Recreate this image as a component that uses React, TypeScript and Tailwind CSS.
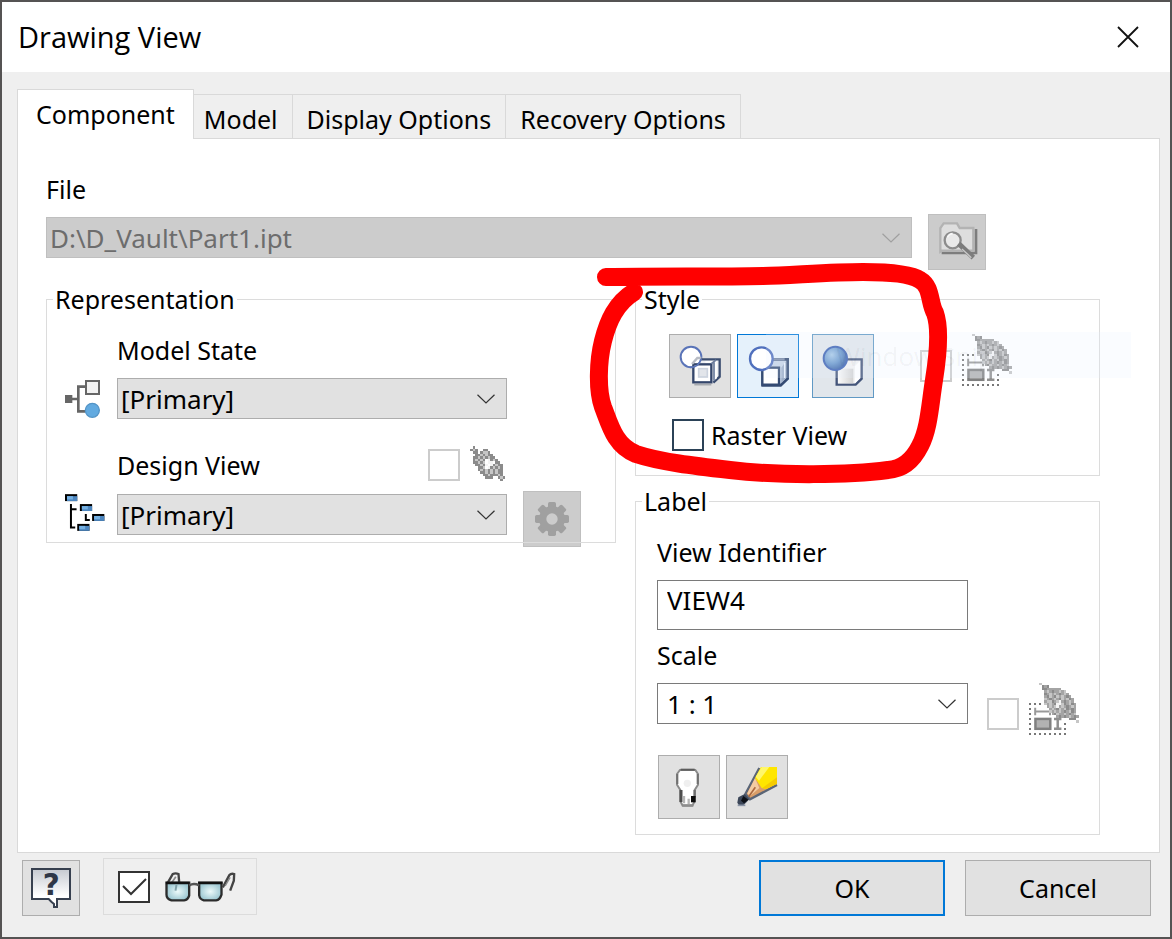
import type { ReactNode } from "react";
import { useState } from "react";

const tabs = ["Component", "Model", "Display Options", "Recovery Options"];

// one character per pixel, "." is empty
const SHADES: Record<string, string> = { d: "#8b8b8b", m: "#a4a4a4", l: "#c6c6c6", w: "#f4f4f4" };

const PLUG = [
  ".d............",
  "dld..dd.......",
  ".dd.dlld......",
  "..ddldldd.....",
  ".ddldldldd....",
  ".dldld.wdld...",
  ".ddldl.ww.dd..",
  "..ddldw.wdldd.",
  "...ddl.wdldld.",
  "...dldldldldd.",
  "....ddldldldd.",
  ".....ddldddld.",
  "......ddd..dld",
  "............d.",
];

const LEAF = [
  "l...............",
  ".dmd............",
  ".ddmmmmmm.......",
  "..mlmdmmlml.....",
  "..dmlmlmdmlm....",
  "..mdlmdlmlmdm...",
  "..lmdmlmdlmldm..",
  "..mlldmlwmdmlm..",
  "..lmlmdwwldmldm.",
  "...mlmlwmlmdmlm.",
  "....mlmdlmldmdm.",
  "....lmlmlmdmldm.",
  ".....mdlmmlmdml.",
  ".......mdmdmlmdm",
  "............ddd.",
  "...............l",
];

function Pixels({ rows, x = 0, y = 0 }: { rows: string[]; x?: number; y?: number }) {
  return (
    <g shapeRendering="crispEdges">
      {rows.flatMap((row, r) =>
        row.split("").map((c, i) =>
          c === "." ? null : (
            <rect key={`${r}-${i}`} x={x + i} y={y + r} width="1" height="1" fill={SHADES[c]} />
          )
        )
      )}
    </g>
  );
}

function InheritIcon() {
  return (
    <svg viewBox="0 0 20 21" className="h-[52px] w-[50px] shrink-0" aria-hidden="true">
      <g fill="#777" shapeRendering="crispEdges">
        {[0, 2, 4].map((x) => (
          <rect key={x} x={x} y="8" width="0.8" height="1" />
        ))}
        {[10, 12, 14, 16, 18].map((y) => (
          <rect key={y} x="0" y={y} width="0.8" height="1" />
        ))}
        {[0, 2, 4, 6, 8, 10, 12, 14].map((x) => (
          <rect key={x} x={x} y="20" width="0.8" height="1" />
        ))}
        <rect x="14" y="16" width="0.8" height="1" />
        <rect x="14" y="18" width="0.8" height="1" />
      </g>
      <path d="M2.4 10V13M2.4 11.5H8.4M8.4 10V13" stroke="#999" strokeWidth="0.8" />
      <rect x="2" y="14" width="7" height="5" fill="#808080" />
      <rect x="3" y="15" width="5" height="3" fill="#b2b2b2" />
      <path d="M10 14.5H13M11.5 14.5V18.5M10 18.5H13" stroke="#8f8f8f" strokeWidth="1" />
      <Pixels rows={LEAF} x={4} y={0} />
    </svg>
  );
}

function Chevron({ className = "text-[#333]" }: { className?: string }) {
  return (
    <svg
      viewBox="0 0 18 10"
      className={`pointer-events-none absolute right-3 top-4 h-[10px] w-[18px] ${className}`}
      fill="none"
      stroke="currentColor"
      strokeWidth="1.2"
      aria-hidden="true"
    >
      <path d="M0.5 0.7L9 9L17.5 0.7" />
    </svg>
  );
}

function Group({ title, className = "", children }: { title: string; className?: string; children: ReactNode }) {
  return (
    <fieldset className={`relative min-w-0 border border-[#dcdcdc] ${className}`}>
      <legend className="ml-[6px] px-[2px] leading-8">{title}</legend>
      {children}
    </fieldset>
  );
}

function ToolButton({ label, className, children }: { label: string; className: string; children: ReactNode }) {
  return (
    <button type="button" aria-label={label} className={`shrink-0 border ${className}`}>
      {children}
    </button>
  );
}

const box = "size-8 shrink-0 appearance-none border-2 bg-white";

function HiddenLinesIcon() {
  return (
    <svg viewBox="90 45 180 186" className="size-full">
      <circle cx="153" cy="111" r="31" fill="#fff" stroke="#5a74b8" strokeWidth="6" />
      <path d="M182 118H239V170L220 188H163" fill="#eef0f3" />
      <path d="M182 118H239V170L220 188" fill="none" stroke="#3b4d70" strokeWidth="7" />
      <path d="M196 126H228V174L218 180" fill="none" stroke="#fff" strokeWidth="5" />
      <rect x="160" y="133" width="54" height="54" fill="#fff" stroke="#34466b" strokeWidth="7" />
      <rect x="176" y="146" width="26" height="25" fill="#e2e5ea" stroke="#ccd3de" strokeWidth="5" />
      <path d="M214 131L228 120M222 126V182" fill="none" stroke="#6c7d9d" strokeWidth="5" />
      <path d="M163 194H214" stroke="#a7aaaf" strokeWidth="5" />
      <path d="M156 132L172 114H184" fill="none" stroke="#b8bcc4" strokeWidth="7" />
      <path d="M150 142Q176 142 184 116" fill="none" stroke="#5a74b8" strokeWidth="5" />
    </svg>
  );
}

function NoHiddenLinesIcon() {
  return (
    <svg viewBox="294 45 180 186" className="size-full">
      <path d="M368 141L390 118H443V176L422 196H368Z" fill="#c6d4e6" stroke="#344b73" strokeWidth="8" />
      <path d="M389 118H434" stroke="#7f8eaa" strokeWidth="7" />
      <path d="M424 143L438 124V174L424 190Z" fill="#9eafc8" />
      <rect x="367" y="143" width="50" height="51" fill="#fff" stroke="#344b73" strokeWidth="7" />
      <path d="M434 128V174" stroke="#e9f2fc" strokeWidth="4" />
      <circle cx="364" cy="116" r="34" fill="#fff" stroke="#5070bd" strokeWidth="7" />
    </svg>
  );
}

function ShadedIcon() {
  return (
    <svg viewBox="519 45 180 186" className="size-full">
      <defs>
        <radialGradient id="ball" cx="35%" cy="35%" r="75%">
          <stop offset="0" stopColor="#a8c9e7" />
          <stop offset="0.5" stopColor="#6a98cc" />
          <stop offset="1" stopColor="#2f589f" />
        </radialGradient>
        <linearGradient id="face">
          <stop offset="0" stopColor="#fafafa" />
          <stop offset="1" stopColor="#d2d2d2" />
        </linearGradient>
      </defs>
      <path d="M590 140L614 118H665V176L647 194H590Z" fill="#f3f3f3" stroke="#44557a" strokeWidth="7" />
      <path d="M594 146H640V190H594Z" fill="url(#face)" />
      <path d="M645 138L660 123V174L645 190Z" fill="#fff" />
      <circle cx="586" cy="115" r="35" fill="url(#ball)" stroke="#3c62b3" strokeWidth="6" />
    </svg>
  );
}

function FolderSearchIcon() {
  return (
    <svg viewBox="117 45 168 162" className="size-full">
      <path d="M155 159H258V87" fill="none" stroke="#7d7d7d" strokeWidth="8" />
      <path d="M151 155V84L161 70H201L209 84H250V152H155Z" fill="#dedede" stroke="#b3b3b3" strokeWidth="7" />
      <circle cx="188" cy="121" r="24" fill="#e9e9e9" stroke="#8c8c8c" strokeWidth="7" />
      <path d="M172 112Q178 101 188 101" fill="none" stroke="#f8f8f8" strokeWidth="5" />
      <path d="M206 131L250 173" stroke="#7c7c7c" strokeWidth="15" />
      <path d="M216 147L244 173" stroke="#c9c9c9" strokeWidth="4" />
    </svg>
  );
}

function GearIcon() {
  return (
    <svg viewBox="342 336 168 162" className="size-full">
      {[0, 45, 90, 135].map((a) => (
        <rect key={a} x="414" y="366" width="24" height="102" rx="5" fill="#a0a0a0" transform={`rotate(${a} 426 417)`} />
      ))}
      <circle cx="426" cy="417" r="39" fill="#a0a0a0" />
      <circle cx="426" cy="417" r="17" fill="#ccc" />
    </svg>
  );
}

function BulbIcon() {
  return (
    <svg viewBox="87 288 180 186" className="size-full">
      <path
        d="M150 330H196L204 342V374L194 390V424L187 437H158L151 424V390L141 374V342Z"
        fill="#fff"
        stroke="#8a8a8a"
        strokeWidth="6"
      />
      <path d="M152 329H194" stroke="#5c5c5c" strokeWidth="6" />
      <path d="M142 342V372M203 342V372" stroke="#707070" strokeWidth="6" />
      <circle cx="172" cy="370" r="11" fill="#efefef" />
      <path d="M153 390V426" stroke="#4d4d4d" strokeWidth="9" />
      <path d="M162 408V430M176 416V432" stroke="#b5b5b5" strokeWidth="7" />
      <path d="M194 390V412" stroke="#6e6e6e" strokeWidth="7" />
      <path d="M190 408V427" stroke="#0c0c0c" strokeWidth="14" />
      <path d="M158 436H190" stroke="#8e8e8e" strokeWidth="7" />
    </svg>
  );
}

function PencilIcon() {
  return (
    <svg viewBox="291 288 180 186" className="size-full">
      <path d="M388 324L346 402L360 418L441 375" fill="#d99d68" stroke="#5a6577" strokeWidth="7" />
      <path d="M375 354L352 400L360 408L388 384Z" fill="#f3cba2" />
      <path d="M376 382L356 410" stroke="#a9683f" strokeWidth="5" />
      <path d="M393 321H441V371L408 387L395 384L375 354Z" fill="#ffe600" />
      <path d="M395 321H418L387 362L377 350Z" fill="#fff76a" />
      <path d="M441 352V371L408 387L397 384Z" fill="#f5cc00" />
      <path d="M344 402L358 418L342 434L328 438L322 428L325 412Z" fill="#3b4658" />
      <path d="M340 408L355 419L342 430L333 422Z" fill="#0e1117" />
      <path d="M323 436H346" stroke="#8993a5" strokeWidth="5" />
    </svg>
  );
}

function HelpIcon() {
  return (
    <svg viewBox="69 63 168 162" className="size-full">
      <defs>
        <linearGradient id="bubble" x2="0" y2="1">
          <stop offset="0" stopColor="#c5c9d0" />
          <stop offset="0.7" stopColor="#fff" />
        </linearGradient>
      </defs>
      <path d="M96 87H210V177H171V201H162V192L154 185L146 177H96Z" fill="url(#bubble)" stroke="#37404f" strokeWidth="6" />
      <text x="154" y="165" textAnchor="middle" fontFamily="DejaVu Sans, sans-serif" fontWeight="700" fontSize="88" fill="#2f3747">
        ?
      </text>
    </svg>
  );
}

function GlassesIcon() {
  return (
    <svg viewBox="495 92 212 90" className="h-[30px] w-[71px]" fill="none" aria-hidden="true">
      <defs>
        <radialGradient id="lens">
          <stop offset="0" stopColor="#edfafa" />
          <stop offset="1" stopColor="#9fc9d3" />
        </radialGradient>
      </defs>
      <path d="M503 124L518 98Q526 94 535 98L537 122" stroke="#444" strokeWidth="7" />
      <path d="M514 125L527 106" stroke="#888" strokeWidth="5" />
      <path d="M499 124H567V163Q563 176 552 177H514Q499 173 499 160Z" fill="url(#lens)" stroke="#2c2c2c" strokeWidth="7" />
      <path d="M597 124H664V160Q659 176 648 177H611Q599 174 597 162Z" fill="url(#lens)" stroke="#2c2c2c" strokeWidth="7" />
      <path d="M497 125H568M594 125H667" stroke="#111" strokeWidth="8" />
      <path d="M567 132Q581 124 597 132" stroke="#555" strokeWidth="8" />
      <path d="M529 130L526 148" stroke="#7fa0a8" strokeWidth="6" />
      <path d="M668 138L687 102Q693 95 702 98L701 118L690 148" stroke="#444" strokeWidth="7" />
      <path d="M675 134L690 108" stroke="#888" strokeWidth="4" />
    </svg>
  );
}

export default function App() {
  const [tab, setTab] = useState("Component");

  return (
    <div className="flex min-h-screen flex-col border-2 border-[#555353] bg-[#efefef] font-['Noto_Sans','Open_Sans',sans-serif] text-[25px] leading-8 text-black">
      {/* Title bar */}
      <header className="flex h-[70px] items-center justify-between bg-white pl-4 pr-[31px]">
        <h1 className="font-['Open_Sans',sans-serif] text-[29px]">Drawing View</h1>
        <button type="button" aria-label="Close">
          <svg viewBox="0 0 22 22" className="size-[22px]" stroke="#111" strokeWidth="1.8">
            <path d="M1 1L21 21M21 1L1 21" />
          </svg>
        </button>
      </header>

      <main className="flex flex-1 flex-col pl-[15px] pr-[10px] pt-[17px]">
        {/* Tabs */}
        <div role="tablist" className="relative z-10 -mb-px flex items-end">
          {tabs.map((t) => (
            <button
              key={t}
              type="button"
              role="tab"
              aria-selected={t === tab}
              onClick={() => setTab(t)}
              className={
                t === tab
                  ? "relative -mr-1 h-[50px] border border-b-0 border-[#d9d9d9] bg-white px-[18px] pb-[2px]"
                  : "h-[45px] border border-l-0 border-[#d9d9d9] px-[14px] pt-1"
              }
            >
              {t}
            </button>
          ))}
        </div>

        <section className="isolate flex-1 border border-[#d9d9d9] bg-white pb-[17px] pl-7 pr-[59px] pt-[34px]">
          <label htmlFor="file" className="block">
            File
          </label>
          <div className="mt-[9px] flex items-start gap-4 pr-[114px]">
            <div className="relative mt-[3px] flex-1">
              <select
                id="file"
                disabled
                className="h-[41px] w-full appearance-none border border-[#bfbfbf] bg-[#ccc] px-[3px] text-[26px] text-[#6d6d6d] opacity-100"
              >
                <option>D:\D_Vault\Part1.ipt</option>
              </select>
              <Chevron className="text-[#a0a0a0]" />
            </div>
            <ToolButton label="Browse" className="h-14 w-[58px] border-[#bfbfbf] bg-[#ccc]">
              <FolderSearchIcon />
            </ToolButton>
          </div>

          <div className="mt-[13px] grid grid-cols-[570fr_465fr] items-start gap-[19px]">
            <Group title="Representation">
              <div className="pl-[70px] pr-[34px] pt-[19px]">
                <label htmlFor="state">Model State</label>
                <div className="-ml-[52px] mt-3 flex items-center gap-4 pr-[74px]">
                  <svg viewBox="105 300 108 114" className="h-[38px] w-9" aria-hidden="true">
                    <path d="M124 357H145M166 320H145V394H166" fill="none" stroke="#666" strokeWidth="8" />
                    <rect x="105" y="345" width="22" height="24" fill="#666" />
                    <rect x="168" y="303" width="39" height="39" fill="#f2f2f2" stroke="#666" strokeWidth="6" />
                    <circle cx="187" cy="391" r="21" fill="#62aae0" stroke="#5394c6" strokeWidth="4" />
                  </svg>
                  <div className="relative flex-1">
                    <select
                      id="state"
                      className="h-[41px] w-full appearance-none border border-[#adadad] bg-[#e1e1e1] px-[3px] text-[26px]"
                    >
                      <option>[Primary]</option>
                    </select>
                    <Chevron />
                  </div>
                </div>

                <div className="mt-[30px] flex h-8 items-center pr-[74px]">
                  <label htmlFor="design" className="flex-1">
                    Design View
                  </label>
                  <input type="checkbox" disabled aria-label="Associative" className={`${box} border-[#ccc]`} />
                  <svg viewBox="0 0 14 14" className="mb-1 ml-[10px] mr-[2px] size-[35px]" aria-hidden="true">
                    <Pixels rows={PLUG} />
                  </svg>
                </div>

                <div className="-mb-[5px] -ml-[52px] mt-[10px] flex items-start gap-3">
                  <svg viewBox="105 642 121 111" className="mt-[3px] h-[37px] w-10" aria-hidden="true">
                    <path d="M123 672V743H136M123 688H140M168 702V720H180" fill="none" stroke="#000" strokeWidth="6" />
                    {[
                      [105, 642],
                      [150, 672],
                      [187, 702],
                      [142, 732],
                    ].map(([x, y]) => (
                      <g key={x}>
                        <rect x={x} y={y} width="37" height="21" fill="#000" />
                        <rect x={x + 6} y={y + 6} width="31" height="15" fill="#4d86bf" />
                        <rect x={x + 6} y={y + 6} width="18" height="10" fill="#74b0e2" />
                      </g>
                    ))}
                  </svg>
                  <div className="relative mt-[3px] flex-1">
                    <select
                      id="design"
                      className="h-[41px] w-full appearance-none border border-[#adadad] bg-[#e1e1e1] px-[3px] text-[26px]"
                    >
                      <option>[Primary]</option>
                    </select>
                    <Chevron />
                  </div>
                  <ToolButton label="Options" className="relative -z-10 ml-1 h-14 w-[58px] border-[#bfbfbf] bg-[#ccc]">
                    <GearIcon />
                  </ToolButton>
                </div>
              </div>
            </Group>

            <div className="flex flex-col gap-[9px]">
              <Group title="Style">
                <div className="pb-6 pl-[33px] pt-[19px]">
                  <div className="flex h-16 items-start">
                    <ToolButton label="Hidden Line" className="h-16 w-[62px] border-[#adadad] bg-[#e1e1e1]">
                      <HiddenLinesIcon />
                    </ToolButton>
                    <ToolButton label="Hidden Line Removed" className="ml-[6px] h-16 w-[62px] border-[#0078d7] bg-[#e5f1fb]">
                      <NoHiddenLinesIcon />
                    </ToolButton>
                    <ToolButton label="Shaded" className="ml-[13px] h-16 w-[62px] border-[#6099c4] bg-[#e1e6eb]">
                      <ShadedIcon />
                    </ToolButton>
                    <input type="checkbox" disabled aria-label="Style from base" className={`${box} ml-[46px] mt-4 border-[#ccc]`} />
                    <span className="ml-[10px]">
                      <InheritIcon />
                    </span>
                  </div>
                  <label className="mt-[21px] flex w-fit items-center gap-[7px] pl-[3px]">
                    <input type="checkbox" className={`${box} border-[#2b4257]`} />
                    Raster View
                  </label>
                </div>

                {/* Fading snip caption */}
                <div className="pointer-events-none absolute left-[130px] top-[17px] h-[46px] w-[365px] bg-[#e5f0ff]/20 pl-[70px] pt-[8px] font-['Open_Sans',sans-serif] text-[26px] text-black/5">
                  Window Snip
                </div>

                {/* Red marker */}
                <svg
                  viewBox="585 260 365 225"
                  className="pointer-events-none absolute -left-[51px] -top-[55px] h-[225px] w-[365px]"
                  fill="none"
                  stroke="#f00"
                  strokeWidth="18"
                  strokeLinecap="round"
                  strokeLinejoin="round"
                  aria-hidden="true"
                >
                  <path d="M606 277C660 276 715 277 763 276C795 275 832 272 863 272C890 272 911 274 920 280C932 287 929 303 935 313C940 327 938 355 934 380C930 405 929 429 920 446C913 460 903 469 888 470C850 475 780 476 730 470C695 466 660 462 636 454C615 446 610 425 603 407C597 390 598 361 603 341C608 321 616 303 634 292" />
                </svg>
              </Group>

              <Group title="Label">
                <div className="pb-[15px] pl-[21px] pt-[19px]">
                  <label htmlFor="identifier" className="block">
                    View Identifier
                  </label>
                  <input
                    id="identifier"
                    defaultValue="VIEW4"
                    className="mt-3 block h-[50px] w-[311px] border border-[#7a7a7a] bg-white px-[9px] pb-[10px] text-[26px]"
                  />
                  <label htmlFor="scale" className="mt-[9px] block">
                    Scale
                  </label>
                  <div className="mt-3 flex items-start">
                    <div className="relative w-[311px]">
                      <select
                        id="scale"
                        className="h-[41px] w-full appearance-none border border-[#7a7a7a] bg-white px-[9px] text-[26px]"
                      >
                        <option>1 : 1</option>
                      </select>
                      <Chevron />
                    </div>
                    <input type="checkbox" disabled aria-label="Scale from base" className={`${box} ml-[19px] mt-[15px] border-[#ccc]`} />
                    <span className="ml-[10px]">
                      <InheritIcon />
                    </span>
                  </div>
                  <div className="mt-5 flex gap-[6px] pl-px">
                    <ToolButton label="Toggle label visibility" className="h-16 w-[62px] border-[#adadad] bg-[#e1e1e1]">
                      <BulbIcon />
                    </ToolButton>
                    <ToolButton label="Edit label" className="h-16 w-[62px] border-[#adadad] bg-[#e1e1e1]">
                      <PencilIcon />
                    </ToolButton>
                  </div>
                </div>
              </Group>
            </div>
          </div>
        </section>
      </main>

      {/* Footer */}
      <footer className="flex items-start pb-[21px] pl-5 pr-[19px] pt-[7px]">
        <ToolButton label="Help" className="h-14 w-[58px] border-[#adadad] bg-[#e1e1e1]">
          <HelpIcon />
        </ToolButton>
        <label className="-mt-[2px] ml-[23px] flex h-[57px] items-center gap-[15px] border border-[#dcdcdc] pl-[14px] pr-5">
          <span className="relative flex">
            <input type="checkbox" defaultChecked aria-label="Preview" className={`${box} peer border-[#333]`} />
            <svg
              viewBox="0 0 32 32"
              className="pointer-events-none invisible absolute inset-0 size-8 peer-checked:visible"
              fill="none"
              stroke="#333"
              strokeWidth="2"
            >
              <path d="M5 15L13 23L28 8" />
            </svg>
          </span>
          <GlassesIcon />
        </label>
        <button type="button" className="ml-auto h-14 w-[186px] border-2 border-[#0078d7] bg-[#e1e1e1]">
          OK
        </button>
        <button type="button" className="ml-5 h-14 w-[186px] border border-[#adadad] bg-[#e1e1e1]">
          Cancel
        </button>
      </footer>
    </div>
  );
}
